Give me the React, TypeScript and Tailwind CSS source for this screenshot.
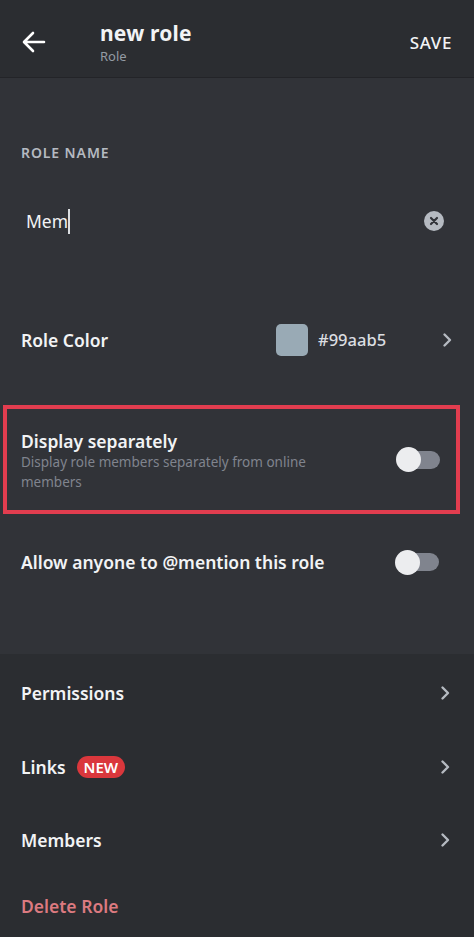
import React from "react";

const Chevron = () => (
  <svg width="12" height="18" viewBox="0 0 12 18" fill="none">
    <path d="M3.5 3.5 L9 9 L3.5 14.5" stroke="#b5bac1" strokeWidth="2.4" strokeLinecap="round" strokeLinejoin="round" />
  </svg>
);

const Toggle = () => (
  <div className="relative w-[44px] h-[26px] flex items-center">
    <div className="absolute left-[8px] right-0 h-[18px] rounded-full bg-[#80848e]" />
    <div className="absolute left-0 w-[25px] h-[25px] rounded-full bg-[#ecedef]" />
  </div>
);

export default function App() {
  return (
    <div className="w-[474px] h-[937px] overflow-hidden bg-[#313338] text-white" style={{ fontFamily: '"Noto Sans", "Open Sans", sans-serif' }}>
      {/* Header */}
      <div className="h-[78px] bg-[#2b2d31] flex items-center border-b border-[#232428]">
        <div className="w-[100px] pl-[22px] pt-[6px] flex items-center">
          <svg width="24" height="22" viewBox="0 0 24 22" fill="none">
            <path d="M22 11 H3 M11 2 L2 11 L11 20" stroke="#ffffff" strokeWidth="2.6" strokeLinecap="round" strokeLinejoin="round" />
          </svg>
        </div>
        <div className="flex-1 flex flex-col pt-[8px]">
          <div className="text-[21px] font-bold leading-[26px] text-[#f2f3f5] tracking-[0.2px]">new role</div>
          <div className="text-[13px] leading-[20px] text-[#949ba4]">Role</div>
        </div>
        <div className="pr-[22px] text-[17px] font-medium text-[#f2f3f5] tracking-[0.6px] pt-[8px]">SAVE</div>
      </div>

      {/* Role name */}
      <div className="px-[21px] pt-[66px]">
        <div className="text-[14px] font-semibold text-[#b5bac1] tracking-[0.9px] leading-[18px]">ROLE NAME</div>
        <div className="mt-[39px] flex items-center justify-between h-[40px]">
          <div className="flex items-center pl-[5px]">
            <span className="text-[17.5px] text-[#f2f3f5]">Mem</span>
            <span className="w-[2px] h-[25px] bg-[#dbdee1]" />
          </div>
          <div className="mr-[9px] w-[20px] h-[20px] rounded-full bg-[#b5bac1] flex items-center justify-center">
            <svg width="10" height="10" viewBox="0 0 10 10">
              <path d="M2 2 L8 8 M8 2 L2 8" stroke="#313338" strokeWidth="2.2" strokeLinecap="round" />
            </svg>
          </div>
        </div>
      </div>

      {/* Role color */}
      <div className="mt-[79px] px-[21px] flex items-center h-[40px]">
        <div className="flex-1 text-[17.5px] font-semibold text-[#f2f3f5]">Role Color</div>
        <div className="w-[32px] h-[32px] rounded-[5px] bg-[#99aab5]" />
        <div className="ml-[10px] text-[16.5px] font-medium text-[#dbdee1] w-[123px]">#99aab5</div>
        <Chevron />
      </div>

      {/* Display separately (highlighted) */}
      <div className="mt-[45px] mx-[3px] w-[457px] h-[109px] border-[4px] border-[#e23d4f] flex items-center pl-[14px] pr-[16px]">
        <div className="flex-1 pt-[2px]">
          <div className="text-[17.5px] font-semibold text-[#f2f3f5] leading-[22px]">Display separately</div>
          <div className="text-[13.5px] text-[#80848e] leading-[20px] w-[310px]">Display role members separately from online members</div>
        </div>
        <Toggle />
      </div>

      {/* Allow mention */}
      <div className="mt-[28px] px-[21px] pr-[35px] flex items-center h-[40px]">
        <div className="flex-1 text-[17.5px] font-semibold text-[#f2f3f5]">Allow anyone to @mention this role</div>
        <Toggle />
      </div>

      {/* Bottom section */}
      <div className="mt-[72px] bg-[#2b2d31] h-[300px] px-[21px] pt-[19px]">
        <div className="h-[40px] flex items-center justify-between">
          <span className="text-[17.5px] font-semibold text-[#f2f3f5]">Permissions</span>
          <span className="mr-[2px]"><Chevron /></span>
        </div>
        <div className="mt-[34px] h-[40px] flex items-center justify-between">
          <div className="flex items-center">
            <span className="text-[17.5px] font-semibold text-[#f2f3f5]">Links</span>
            <span className="ml-[11px] h-[22px] px-[7px] rounded-full bg-[#da373c] text-[15px] font-semibold flex items-center text-white">NEW</span>
          </div>
          <span className="mr-[2px]"><Chevron /></span>
        </div>
        <div className="mt-[33px] h-[40px] flex items-center justify-between">
          <span className="text-[17.5px] font-semibold text-[#f2f3f5]">Members</span>
          <span className="mr-[2px]"><Chevron /></span>
        </div>
        <div className="mt-[26px] h-[40px] flex items-center">
          <span className="text-[17.5px] font-semibold text-[#dc7a80]">Delete Role</span>
        </div>
      </div>
    </div>
  );
}
